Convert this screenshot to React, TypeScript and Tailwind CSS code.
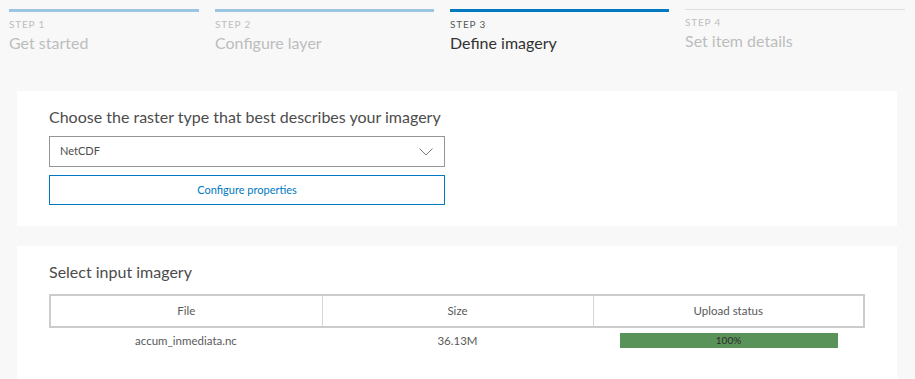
const steps = [
  { label: "STEP 1", title: "Get started", state: "done", width: "w-[190px]" },
  { label: "STEP 2", title: "Configure layer", state: "done", width: "w-[219px]" },
  { label: "STEP 3", title: "Define imagery", state: "active", width: "w-[219px]" },
  { label: "STEP 4", title: "Set item details", state: "todo", width: "w-[220px]" },
];

const Stepper = () => (
  <div className="flex gap-4 pl-[9px] pt-[9px]">
    {steps.map((s) => (
      <div key={s.label} className={s.width}>
        {s.state === "todo" ? (
          <div className="h-px bg-[#dedede]" />
        ) : (
          <div
            className={
              s.state === "active" ? "h-[3px] bg-[#0079c1]" : "h-[3px] bg-[#9bc5e2]"
            }
          />
        )}
        <div
          className={`mt-[7px] text-[10px] leading-none tracking-[0.08em] ${
            s.state === "active" ? "text-[#595959]" : "text-[#bdbdbd]"
          }`}
        >
          {s.label}
        </div>
        <div
          className={`mt-[4px] text-[16px] leading-[20px] ${
            s.state === "active" ? "text-[#323232]" : "text-[#bdbdbd]"
          }`}
        >
          {s.title}
        </div>
      </div>
    ))}
  </div>
);

const App = () => {
  return (
    <div
      className="h-[379px] w-[915px] overflow-hidden bg-[#f8f8f8]"
      style={{ fontFamily: "Lato, 'Open Sans', sans-serif" }}
    >
      <Stepper />

      {/* raster type card */}
      <div className="mx-[17px] mt-[38px] w-[880px] bg-white px-8 pb-[21px] pt-[16px]">
        <h3 className="text-[16px] leading-[20px] text-[#4c4c4c]">
          Choose the raster type that best describes your imagery
        </h3>
        <div className="mt-[9px] flex h-[31px] w-[396px] items-center justify-between border border-[#959595] pl-[10px] pr-[10px]">
          <span className="text-[11px] text-[#4c4c4c]">NetCDF</span>
          <svg width="14" height="8" viewBox="0 0 14 8" className="mr-[1px]">
            <polyline points="0.5,0.5 7,7 13.5,0.5" fill="none" stroke="#7a7a7a" strokeWidth="1" />
          </svg>
        </div>
        <button className="mt-[8px] flex h-[30px] w-[396px] items-center justify-center border border-[#0079c1] text-[11px] text-[#0079c1]">
          Configure properties
        </button>
      </div>

      {/* input imagery card */}
      <div className="mx-[17px] mt-[20px] h-[160px] w-[880px] bg-white px-8 pt-[16px]">
        <h3 className="text-[16px] leading-[20px] text-[#4c4c4c]">Select input imagery</h3>
        <table className="mt-[12px] w-[816px] table-fixed border-collapse text-[11.5px] text-[#595959]">
          <thead>
            <tr className="h-[32px] border-2 border-[#cccccc]">
              <th className="w-[272px] border-r border-[#d6d6d6] font-normal">File</th>
              <th className="w-[271px] border-r border-[#d6d6d6] font-normal">Size</th>
              <th className="font-normal">Upload status</th>
            </tr>
          </thead>
          <tbody>
            <tr className="h-[26px]">
              <td className="text-center">accum_inmediata.nc</td>
              <td className="text-center">36.13M</td>
              <td>
                <div className="mx-auto h-[15px] w-[218px] bg-[#5a9359] text-center text-[10px] leading-[15px] text-[#2b2b2b]">
                  100%
                </div>
              </td>
            </tr>
          </tbody>
        </table>
      </div>
    </div>
  );
};

export default App;
